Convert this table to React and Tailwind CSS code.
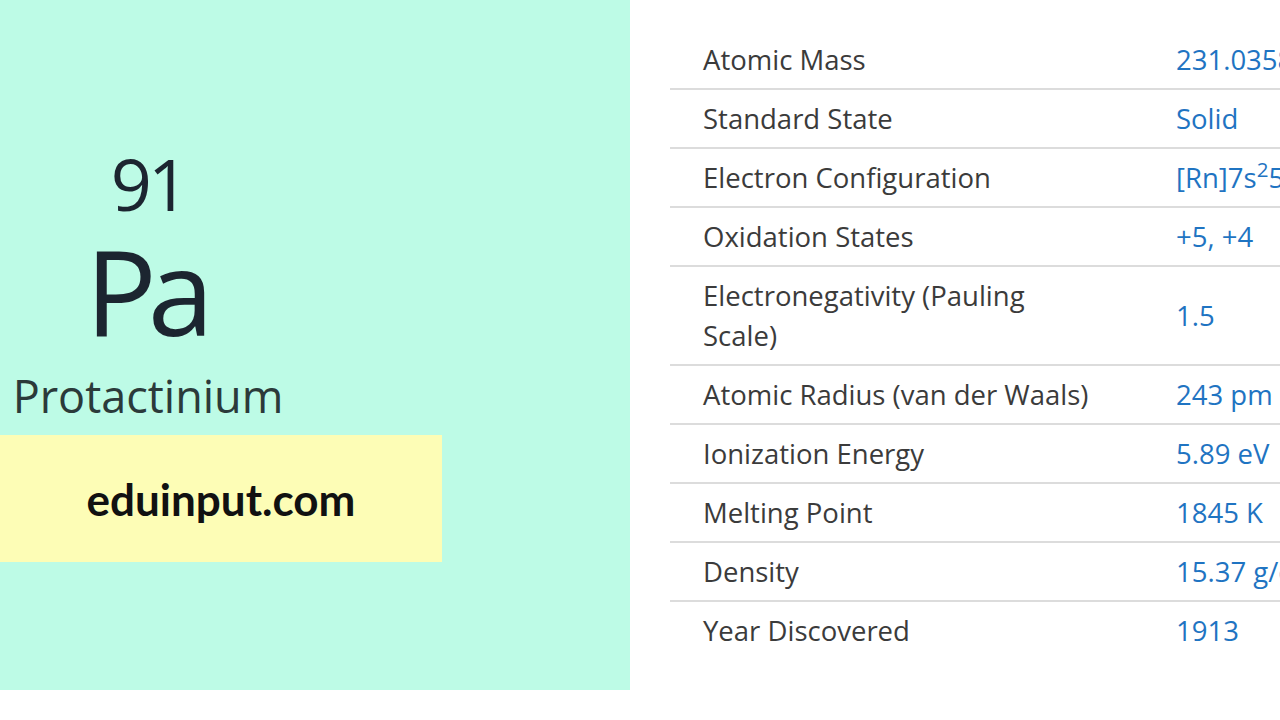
const rows = [
  { label: 'Atomic Mass', value: '231.0358 u' },
  { label: 'Standard State', value: 'Solid' },
  {
    label: 'Electron Configuration',
    value: (
      <>
        [Rn]7s<sup>2</sup>5f<sup>2</sup>6d<sup>1</sup>
      </>
    ),
  },
  { label: 'Oxidation States', value: '+5, +4' },
  {
    label: (
      <>
        Electronegativity (Pauling
        <br />
        Scale)
      </>
    ),
    value: '1.5',
  },
  { label: 'Atomic Radius (van der Waals)', value: '243 pm' },
  { label: 'Ionization Energy', value: '5.89 eV' },
  { label: 'Melting Point', value: '1845 K' },
  { label: 'Density', value: '15.37 g/cm³' },
  { label: 'Year Discovered', value: '1913', last: true },
]

export default function App() {
  return (
    <div className="w-[1280px] h-[720px] flex bg-white overflow-hidden font-['Open_Sans',sans-serif]">
      {/* Element card */}
      <div className="w-[630px] h-[690px] shrink-0 bg-[#bdfbe6] flex flex-col">
        <div className="w-[296px] flex flex-col items-center pt-[147px] text-[#1c2530]">
          <div className="text-[72px] leading-[72px] h-[84px] tracking-[-4px]">91</div>
          <div className="text-[119px] leading-[119px] h-[136px] tracking-[-9px] pr-[6px]">Pa</div>
          <div className="text-[45px] leading-[50px] text-[#2b3a3a] mt-[4px]">Protactinium</div>
        </div>
        <div className="mt-[14px] w-[442px] h-[127px] bg-[#fdfdb6] flex items-center justify-center">
          <span className="text-[44px] font-bold text-[#111] font-['Lato',sans-serif]">eduinput.com</span>
        </div>
      </div>

      {/* Properties table */}
      <div className="flex-1 pl-[40px] pt-[31px]">
        {rows.map((row, i) => (
          <div
            key={i}
            className={`flex items-center min-h-[58.7px] py-[8.5px] ${row.last ? '' : 'border-b-2 border-[#dcdcdc]'}`}
          >
            <div className="w-[506px] shrink-0 pl-[33px] pr-[20px] text-[27.5px] leading-[40px] text-[#3b3b3b]">
              {row.label}
            </div>
            <div className="whitespace-nowrap text-[27.5px] leading-[40px] text-[#1f74c2]">{row.value}</div>
          </div>
        ))}
      </div>
    </div>
  )
}
